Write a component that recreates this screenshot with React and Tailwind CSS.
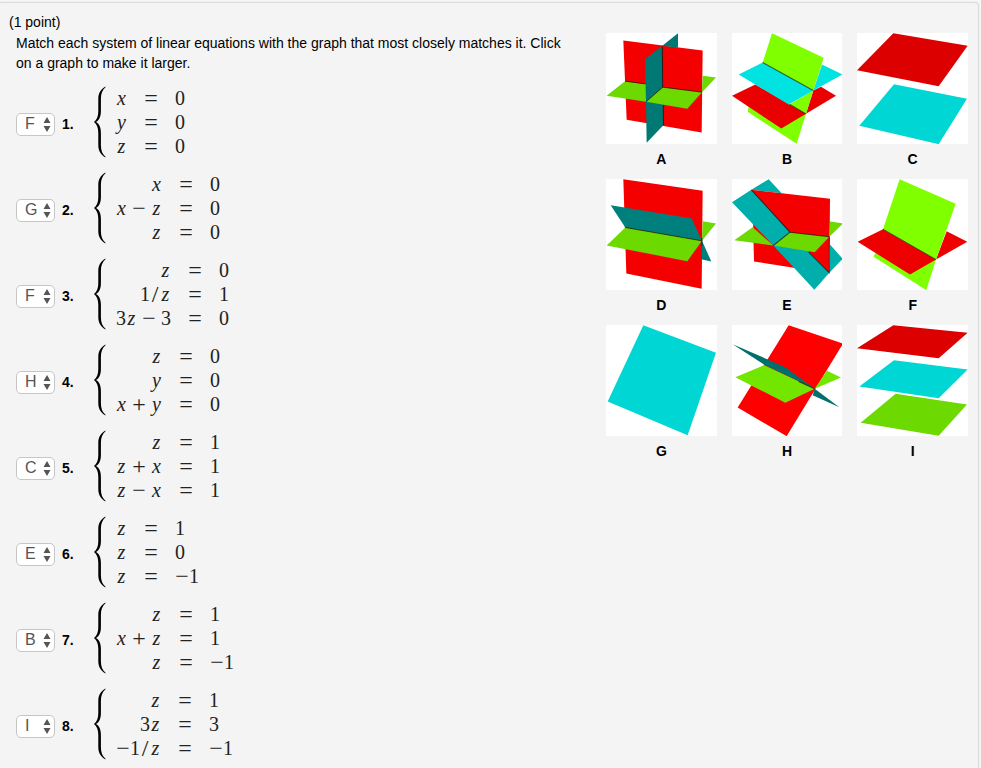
import React, { useState } from 'react';

const RED = '#f50000';
const DARK_RED = '#dd0000';
const LIME = '#80ff00';
const GREEN = '#6cd900';
const CYAN = '#00d7d4';
const TEAL = '#007873';
const SEA = '#00aeab';

// Planes are listed back to front, `lines` are the intersections drawn on top
const GRAPHS = [
  {
    id: 'A',
    planes: [
      ['52,22 290,52 287,298 62,260', RED],
      ['290,128 330,133 288,177', GREEN],
      ['169,38 216,0 216,44', TEAL],
      ['2,188 57,144 120,153 120,206', GREEN],
      ['117,78 169,38 170,162 120,206', TEAL],
      ['120,206 172,162 172,276 122,329', TEAL],
      ['120,206 170,162 288,177 244,227', GREEN],
    ],
    lines: ['169,38 170,162', '172,216 172,276', '57,144 117,152', '120,206 170,162 288,177'],
  },
  {
    id: 'B',
    planes: [
      ['50,218 47,236 194,332 222,242', LIME],
      ['0,188 70,154 222,242 148,286', '#ea0000'],
      ['222,242 244,172 267,161 312,188', '#ea0000'],
      ['172,214 244,172 222,242', LIME],
      ['20,124 92,88 244,172 170,214', '#00e3e0'],
      ['244,172 270,94 331,124', '#00e3e0'],
      ['120,0 275,74 244,172 92,88', LIME],
    ],
    lines: ['92,88 244,172', '174,214 222,242'],
  },
  {
    id: 'C',
    planes: [
      ['109,0 332,38 245,159 0,111', DARK_RED],
      ['111,153 330,197 245,333 7,278', CYAN],
    ],
    lines: [],
  },
  {
    id: 'D',
    planes: [
      ['52,0 290,35 287,329 61,283', RED],
      ['290,126 330,133 288,185', GREEN],
      ['288,185 316,247 288,241', '#00807c'],
      ['14,78 257,118 288,185 58,145', '#00807c'],
      ['2,199 58,145 288,185 244,246', GREEN],
    ],
    lines: ['58,145 288,185', '288,177 288,200'],
  },
  {
    id: 'E',
    planes: [
      ['58,32 110,0 149,42', SEA],
      ['58,32 294,59 292,281 185,266 66,247 62,80', RED],
      ['294,196 332,239 292,281', SEA],
      ['124,199 174,159 292,281 247,332', SEA],
      ['7,183 62,144 124,199', GREEN],
      ['0,69 58,32 174,159 124,199', SEA],
      ['294,127 333,133 292,173', GREEN],
      ['124,199 174,159 292,173 248,219', GREEN],
    ],
    lines: ['58,32 174,159 292,173', '174,159 124,199', '230,219 292,281 292,173'],
  },
  {
    id: 'F',
    planes: [
      ['54,222 50,233 208,333 237,241', LIME],
      ['2,188 78,150 237,241 159,286', '#ee0000'],
      ['237,241 269,156 331,188', '#ee0000'],
      ['128,0 296,74 237,241 78,150', LIME],
    ],
    lines: ['78,150 237,241'],
  },
  {
    id: 'G',
    planes: [['112,0 330,83 245,330 5,229', CYAN]],
    lines: [],
  },
  {
    id: 'H',
    planes: [
      ['170,0 333,55 164,333 17,247', '#ff0000'],
      ['248,191 285,137 327,157', '#73e600'],
      ['10,156 97,120 248,191 160,233', '#73e600'],
      ['2,57 160,126 248,191 97,119', '#00706c'],
      ['248,191 322,246 242,210', '#00706c'],
    ],
    lines: ['200,169 248,191'],
  },
  {
    id: 'I',
    planes: [
      ['109,0 332,23 245,99 0,69', DARK_RED],
      ['111,105 332,133 245,219 7,184', CYAN],
      ['116,206 330,238 245,332 11,293', GREEN],
    ],
    lines: [],
  },
];

const PROBLEMS = [
  { answer: 'F', rows: [['x', '0'], ['y', '0'], ['z', '0']] },
  { answer: 'G', rows: [['x', '0'], ['x−z', '0'], ['z', '0']] },
  { answer: 'F', rows: [['z', '0'], ['1/z', '1'], ['3z−3', '0']] },
  { answer: 'H', rows: [['z', '0'], ['y', '0'], ['x+y', '0']] },
  { answer: 'C', rows: [['z', '1'], ['z+x', '1'], ['z−x', '1']] },
  { answer: 'E', rows: [['z', '1'], ['z', '0'], ['z', '−1']] },
  { answer: 'B', rows: [['z', '1'], ['x+z', '1'], ['z', '−1']] },
  { answer: 'I', rows: [['z', '1'], ['3z', '3'], ['−1/z', '−1']] },
];

function tokenClass(char, index) {
  if ('xyz'.includes(char)) return 'w-[11px] italic';
  if (char === '+' || char === '−') return index === 0 ? 'w-[14px] text-2xl/6' : 'w-6 text-2xl/6';
  if (char === '/') return 'w-[10px] text-2xl/6';
  return 'w-[10px]';
}

function Expr({ text }) {
  return (
    <span className="flex">
      {[...text].map((char, i) => (
        <span key={i} className={`flex justify-center ${tokenClass(char, i)}`}>{char}</span>
      ))}
    </span>
  );
}

function Brace() {
  return (
    <svg viewBox="0 0 12 72" className="h-[72px] w-3 shrink-0" aria-hidden="true">
      <path d="M11.5 0.5C7 3 4.3 7 4.3 13V25C4.3 30 3 33.5 0 36C3 38.500 4.300 42 4.300 47V59C4.300 65 7 69 11.500 71.500V70.800C8.300 68 6.900 64.500 6.900 59V47C6.900 41.500 5.500 38 2 36C5.500 34 6.900 30.500 6.900 25V13C6.900 7.500 8.300 4 11.500 1.200Z" />
    </svg>
  );
}

function Problem({ number, problem }) {
  const [value, setValue] = useState(problem.answer);
  const id = `answer-${number}`;

  return (
    <li className="flex items-center">
      <div className="flex items-center pt-1">
        <div className="relative">
          <select
            id={id}
            value={value}
            onChange={(e) => setValue(e.target.value)}
            className="block h-[23px] w-[39px] appearance-none rounded-[5px] border border-[#c6c6c6] bg-white pl-2 text-base/5 text-[#555]"
          >
            {GRAPHS.map((g) => (
              <option key={g.id} value={g.id}>{g.id}</option>
            ))}
          </select>
          <svg viewBox="0 0 8 15" className="pointer-events-none absolute top-1 right-1 h-[15px] w-2" aria-hidden="true">
            <path d="M4 0L7.500 6H0.500ZM4 15L7.500 9H0.500Z" fill="#555" />
          </svg>
        </div>
        <label htmlFor={id} className="ml-[7px] w-8 text-sm/5 font-bold">{number}.</label>
      </div>

      <Brace />
      <div className="ml-[10px] grid grid-cols-[auto_16px_auto] gap-x-4 font-['Liberation_Serif',serif] text-xl/6 text-[#222]">
        {problem.rows.map(([left, right], i) => (
          <React.Fragment key={i}>
            <span className="flex justify-end"><Expr text={left} /></span>
            <span className="text-center text-2xl/6">=</span>
            <Expr text={right} />
          </React.Fragment>
        ))}
      </div>
    </li>
  );
}

function Graph({ graph }) {
  return (
    <figure>
      <button type="button" aria-label={`Graph ${graph.id}`} className="block w-full cursor-pointer bg-white">
        <svg viewBox="0 0 332 332" className="block h-[111px] w-full">
          {graph.planes.map(([points, fill]) => (
            <polygon key={points} points={points} fill={fill} />
          ))}
          {graph.lines.map((points) => (
            <polyline key={points} points={points} fill="none" stroke="#000" strokeOpacity="0.6" strokeWidth="3" />
          ))}
        </svg>
      </button>
      <figcaption className="text-center text-sm/[30px] font-bold">{graph.id}</figcaption>
    </figure>
  );
}

export default function App() {
  return (
    <div className="min-h-screen bg-[#f8f8f8] pt-0.5 pr-0.5 font-['Liberation_Sans',Arial,sans-serif] text-sm/5 text-black">
      <main className="min-h-screen rounded-tr-sm border-t border-r border-[#dcdcdc] bg-[#f4f4f4] pt-[9px] pr-[10px] pb-2 pl-[9px] shadow-[0_0_2px_rgba(0,0,0,0.12)]">
        <p>(1 point)</p>

        <div className="mt-px flex items-start gap-8 pl-[7px]">
          <section className="min-w-0 flex-1">
            <p>
              Match each system of linear equations with the graph that most closely matches it. Click
              on a graph to make it larger.
            </p>
            <ol className="mt-[13px] flex flex-col gap-[14px]">
              {PROBLEMS.map((problem, i) => (
                <Problem key={i} number={i + 1} problem={problem} />
              ))}
            </ol>
          </section>

          {/* Graph choices */}
          <section className="grid w-[362px] shrink-0 grid-cols-3 gap-x-[15px] gap-y-[5px]">
            {GRAPHS.map((graph) => (
              <Graph key={graph.id} graph={graph} />
            ))}
          </section>
        </div>
      </main>
    </div>
  );
}
